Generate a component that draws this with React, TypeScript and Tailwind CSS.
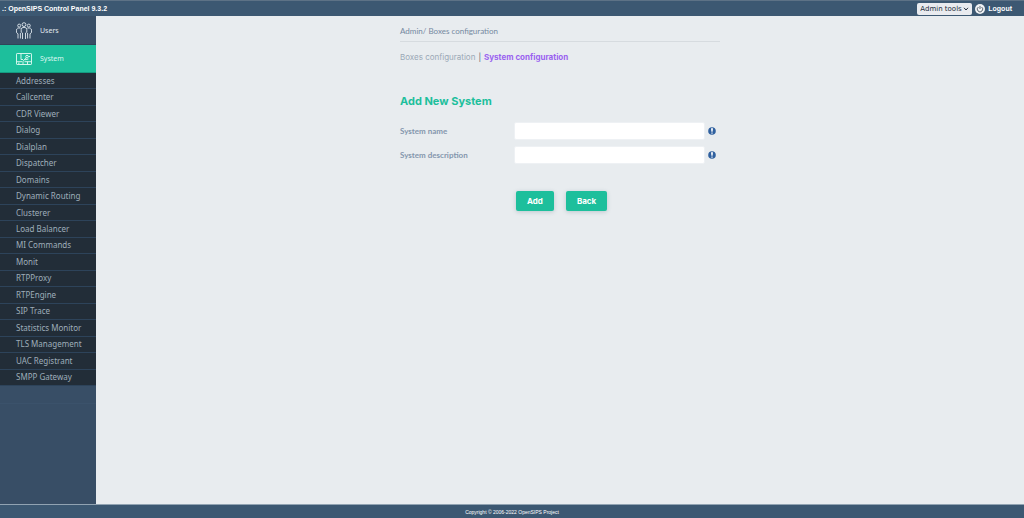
import { useId } from "react";

const modules = [
  "Addresses",
  "Callcenter",
  "CDR Viewer",
  "Dialog",
  "Dialplan",
  "Dispatcher",
  "Domains",
  "Dynamic Routing",
  "Clusterer",
  "Load Balancer",
  "MI Commands",
  "Monit",
  "RTPProxy",
  "RTPEngine",
  "SIP Trace",
  "Statistics Monitor",
  "TLS Management",
  "UAC Registrant",
  "SMPP Gateway",
];

function UsersIcon() {
  return (
    <svg className="h-[18px] w-4 shrink-0" viewBox="0 0 16 18" fill="none" stroke="#dfe6ed" strokeWidth="0.9" strokeLinejoin="round" aria-hidden="true">
      <circle cx="8" cy="2.6" r="1.9" />
      <circle cx="3.2" cy="3.6" r="1.5" />
      <circle cx="12.8" cy="3.6" r="1.5" />
      <path d="M6.5 17V11L5.2 10V7.2Q5.2 5.4 8 5.4T10.8 7.2V10L9.5 11V17" />
      <path d="M4.6 6.1Q0.5 5.4 0.5 8.2V10.6L2 11.8V16.5M4.4 10.8V16.5M11.4 6.1Q15.5 5.4 15.5 8.2V10.6L14 11.8V16.5M11.6 10.8V16.5" />
    </svg>
  );
}

function SystemIcon() {
  return (
    <svg className="h-3 w-4 shrink-0" viewBox="0 0 16 12" fill="none" stroke="#e3faf4" strokeWidth="0.9" aria-hidden="true">
      <rect x="0.5" y="0.5" width="15" height="11" rx="0.6" />
      <path d="M0.5 8.7H6M5 0.5V6.5H7M7 11.5V8.3L10.2 4.6M8.5 8.7H15.5M9 6.8L12.5 6M11.5 11.5V8.7" />
      <circle cx="11" cy="3.6" r="1.3" />
      <path d="M12.5 3.5H14M2 10.2H3.5" />
    </svg>
  );
}

function InfoIcon() {
  return (
    <svg className="size-2 shrink-0" viewBox="0 0 8 8" role="img" aria-label="Required">
      <circle cx="4" cy="4" r="3.8" fill="#2f609f" />
      <path d="M3 1.2H5L4.6 4.8H3.4ZM3.4 5.5H4.6V6.7H3.4Z" fill="#fff" />
    </svg>
  );
}

function Field({ label }: { label: string }) {
  const id = useId();
  return (
    <div className="flex items-center">
      <label htmlFor={id} className="w-[114px] font-['Lato',sans-serif] text-[8px] font-bold text-[#8496ad]">
        {label}
      </label>
      <input id={id} type="text" className="h-[18px] min-w-0 flex-1 rounded-xs border border-[#eef1f4] bg-white px-1 text-[9px] outline-none" />
      <span className="ml-[3px]">
        <InfoIcon />
      </span>
    </div>
  );
}

const actionButton =
  "h-5 rounded-xs bg-[#1dbf9c] px-[11px] text-[8px] font-bold text-white shadow-[0_1px_4px_rgba(60,90,110,0.25)]";

export default function App() {
  return (
    <div className="flex min-h-screen flex-col bg-[#e8ecef] font-['Liberation_Sans',sans-serif]">
      <header className="flex h-4 items-center justify-between border-t border-[#5d7286] bg-[#3c5872] pt-px pr-3 pl-0.5 text-[7px] font-bold text-white">
        <span>.: OpenSIPS Control Panel 9.3.2</span>
        <div className="flex items-center">
          <div className="relative flex">
            <select aria-label="Admin tools" className="h-3 w-[55px] appearance-none rounded-xs bg-[#e9ebef] pl-[3px] font-['DejaVu_Sans',sans-serif] text-[7px] leading-3 font-normal text-[#222b3a]">
              <option>Admin tools</option>
            </select>
            <svg className="pointer-events-none absolute top-1 right-[3px] h-1 w-1.5" viewBox="0 0 6 4" fill="none" stroke="#222b3a" strokeWidth="1" aria-hidden="true">
              <path d="M1 0.8L3 3L5 0.8" />
            </svg>
          </div>
          <a href="#logout" className="ml-[3px] flex items-center gap-[3px]">
            <svg className="size-2.5" viewBox="0 0 10 10" fill="none" aria-hidden="true">
              <circle cx="5" cy="5" r="5" fill="#f1f3f5" />
              <path d="M3.4 3A2.7 2.7 0 1 0 6.6 3M5 1.9V5" stroke="#4d5965" strokeWidth="0.9" />
            </svg>
            Logout
          </a>
        </div>
      </header>

      <div className="flex flex-1">
        <nav className="w-24 shrink-0 bg-[#384e66] font-['Noto_Sans',sans-serif]">
          <a href="#users" className="flex h-[29px] items-center gap-2 border-b border-[#2f4459] px-4 pt-0.5 text-[7px] text-[#e1e8ee]">
            <UsersIcon />
            Users
          </a>
          <a href="#system" className="flex h-7 items-center gap-2 border-b border-[#159a80] bg-[#1dbf9c] px-4 pt-px text-[7px] text-[#dcf8f1]">
            <SystemIcon />
            System
          </a>
          <ul className="grid h-[313px] auto-rows-fr bg-[#222d38] font-['Noto_Sans',sans-serif] text-[8px] text-[#9fadba]">
            {modules.map((name) => (
              <li key={name} className="flex min-h-0 border-b border-[#2d435a]">
                <a href="#module" className="flex flex-1 items-center pl-4 leading-none whitespace-nowrap">
                  {name}
                </a>
              </li>
            ))}
          </ul>
          <div className="h-[18px] border-b border-[#3b526b]" />
        </nav>

        <main className="flex flex-1 justify-center font-['Inter',sans-serif] text-[8px]">
          <div className="w-80">
            <div className="flex h-[26px] items-center border-b border-[#d6dbdf] pt-1 font-['Lato',sans-serif] text-[#75899f]">
              Admin/ Boxes configuration
            </div>
            <div className="flex h-[30px] items-center gap-[3px] text-[#9aa8b6]">
              <a href="#boxes">Boxes configuration</a>
              <span className="text-[#52606e]">|</span>
              <a href="#system-configuration" className="font-bold text-[#9a62f0]">
                System configuration
              </a>
            </div>
            <h1 className="mt-[21px] text-[11px] leading-4 font-bold text-[#1dbf9c]">Add New System</h1>
            <form className="mt-[13px]" onSubmit={(event) => event.preventDefault()}>
              <div className="flex flex-col gap-1.5 pr-1">
                <Field label="System name" />
                <Field label="System description" />
              </div>
              <div className="mt-[27px] flex gap-3 pl-[116px]">
                <button type="submit" className={actionButton}>
                  Add
                </button>
                <button type="button" className={actionButton}>
                  Back
                </button>
              </div>
            </form>
          </div>
        </main>
      </div>

      <footer className="flex h-3.5 items-center justify-center border-t border-[#91a3b2] bg-[#3c5872] pt-[3px] text-[5px] text-white">
        Copyright © 2006-2022 OpenSIPS Project
      </footer>
    </div>
  );
}
